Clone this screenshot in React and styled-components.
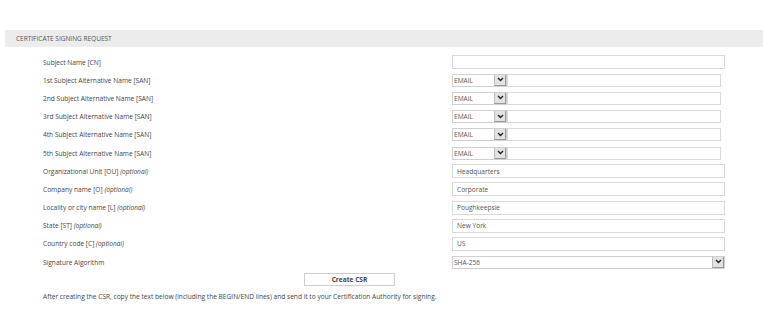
import React from "react";
import styled, { createGlobalStyle } from "styled-components";

const Global = createGlobalStyle`
  html, body { margin: 0; padding: 0; background: #fff; }
  body { font-family: "Open Sans", "Noto Sans", sans-serif; color: #444; }
`;

const Page = styled.div`
  width: 768px;
  height: 318px;
  overflow: hidden;
  padding-top: 30px;
  box-sizing: border-box;
`;

const Header = styled.div`
  margin: 0 5px;
  height: 17px;
  background: #ececec;
  display: flex;
  align-items: center;
  padding-left: 11px;
  font-size: 6.5px;
  color: #555;
  text-transform: uppercase;
`;

const Form = styled.div`
  display: grid;
  grid-template-columns: 409px 273px;
  grid-auto-rows: 18.2px;
  padding-left: 43px;
  margin-top: 6px;
`;

const Label = styled.div`
  display: flex;
  align-items: center;
  font-size: 6.6px;
  color: #444;
  white-space: pre;
`;

const Cell = styled.div`
  display: flex;
  align-items: center;
`;

const TextBox = styled.div`
  box-sizing: border-box;
  height: ${(p) => (p.$h ? p.$h : 14)}px;
  width: ${(p) => p.$w}px;
  border: 1px solid #d9d9d9;
  background: #fff;
  font-size: 6.6px;
  color: #555;
  display: flex;
  align-items: center;
  padding-left: 4px;
`;

const Select = styled.div`
  box-sizing: border-box;
  height: 13px;
  width: ${(p) => p.$w}px;
  border: 1px solid #d0d0d0;
  background: #fff;
  font-size: 6.6px;
  color: #555;
  display: flex;
  align-items: center;
  justify-content: space-between;
  padding-left: 1px;
`;

const Arrow = styled.div`
  box-sizing: border-box;
  width: 12px;
  height: 11px;
  background: #e3e3e3;
  border-left: 1px solid #bbb;
  border-right: 1px solid #999;
  border-bottom: 1px solid #999;
  display: flex;
  align-items: center;
  justify-content: center;
`;

const ButtonRow = styled.div`
  display: flex;
  padding-left: 304px;
  margin-top: 2px;
`;

const Button = styled.div`
  box-sizing: border-box;
  width: 91px;
  height: 13px;
  border: 1px solid #cfcfcf;
  background: #fff;
  font-size: 6.6px;
  font-weight: 700;
  color: #444;
  display: flex;
  align-items: center;
  justify-content: center;
`;

const Note = styled.div`
  padding-left: 43px;
  margin-top: 6px;
  font-size: 6.6px;
  color: #444;
`;

const Chevron = () => (
  <svg width="7" height="5" viewBox="0 0 7 5">
    <path d="M1 1 L3.5 3.5 L6 1" stroke="#222" strokeWidth="1.4" fill="none" />
  </svg>
);

const SelectBox = ({ value, w }) => (
  <Select $w={w}>
    <span>{value}</span>
    <Arrow>
      <Chevron />
    </Arrow>
  </Select>
);

const rows = [
  { label: "Subject Name [CN]", type: "text", value: "" },
  { label: "1st Subject Alternative Name [SAN]", type: "san" },
  { label: "2nd Subject Alternative Name [SAN]", type: "san" },
  { label: "3rd Subject Alternative Name [SAN]", type: "san" },
  { label: "4th Subject Alternative Name [SAN]", type: "san" },
  { label: "5th Subject Alternative Name [SAN]", type: "san" },
  { label: "Organizational Unit [OU]", opt: true, type: "text", value: "Headquarters" },
  { label: "Company name [O]", opt: true, type: "text", value: "Corporate" },
  { label: "Locality or city name [L]", opt: true, type: "text", value: "Poughkeepsie" },
  { label: "State [ST]", opt: true, type: "text", value: "New York" },
  { label: "Country code [C]", opt: true, type: "text", value: "US" },
  { label: "Signature Algorithm", type: "select", value: "SHA-256" },
];

export default function App() {
  return (
    <Page>
      <Global />
      <Header>Certificate Signing Request</Header>
      <Form>
        {rows.map((r, i) => (
          <React.Fragment key={i}>
            <Label>
              {r.label}
              {r.opt && <> <em>(optional)</em></>}
            </Label>
            <Cell>
              {r.type === "text" && <TextBox $w={273}>{r.value}</TextBox>}
              {r.type === "san" && (
                <>
                  <SelectBox value="EMAIL" w={55} />
                  <TextBox $w={214} $h={13} />
                </>
              )}
              {r.type === "select" && <SelectBox value={r.value} w={273} />}
            </Cell>
          </React.Fragment>
        ))}
      </Form>
      <ButtonRow>
        <Button>Create CSR</Button>
      </ButtonRow>
      <Note>
        After creating the CSR, copy the text below (including the BEGIN/END lines) and send it to your Certification Authority for signing.
      </Note>
    </Page>
  );
}
